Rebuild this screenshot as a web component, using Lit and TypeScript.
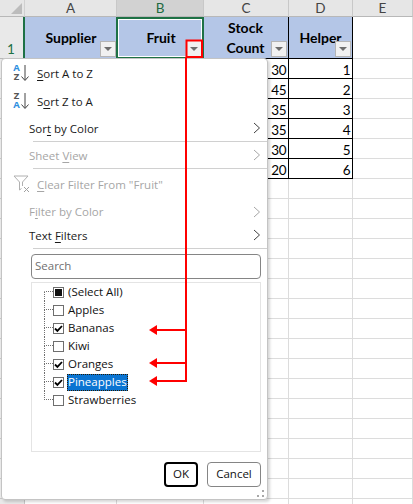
import { LitElement, html, css, svg } from "lit";
import { customElement } from "lit/decorators.js";

const COLS = ["A", "B", "C", "D", "E"];
const STOCK = ["30", "45", "35", "35", "30", "20"];
const FILTER_ITEMS: [string, string][] = [
  ["(Select All)", "mixed"],
  ["Apples", "off"],
  ["Bananas", "on"],
  ["Kiwi", "off"],
  ["Oranges", "on"],
  ["Pineapples", "on"],
  ["Strawberries", "off"],
];

const chevron = html`<svg class="chev" width="8" height="12" viewBox="0 0 8 12"><path d="M1 1l5.5 5L1 11" fill="none" stroke="currentColor" stroke-width="1"/></svg>`;

@customElement("app-root")
export class AppRoot extends LitElement {
  static styles = css`
    :host { display: block; position: relative; width: 413px; height: 504px; overflow: hidden; background: #fff; font-family: Lato, "Liberation Sans", sans-serif; }
    * { box-sizing: border-box; }
    .sheet { display: grid; grid-template-columns: 25px 92px 87px 85px 64px 60px; grid-template-rows: 17px 42px repeat(23, 20px); height: 504px; overflow: hidden; }
    .corner { background: #e6e6e6; border-right: 1px solid #d0d0d0; border-bottom: 1px solid #b8b8b8; position: relative; }
    .corner::after { content: ""; position: absolute; right: 2px; bottom: 2px; border-style: solid; border-width: 0 0 11px 11px; border-color: transparent transparent #bcbcbc transparent; }
    .colh { background: #e6e6e6; border-right: 1px solid #c8c8c8; border-bottom: 1px solid #b8b8b8; text-align: center; font-size: 13.5px; line-height: 16px; color: #444; }
    .colh.sel { background: #d2d2d2; color: #1e6b41; }
    .rowh { background: #e9e9e9; border-right: 2px solid #1e7145; border-bottom: 1px solid #b8b8b8; color: #1e7145; font-size: 13.5px; display: flex; align-items: flex-end; justify-content: center; line-height: 17px; padding-right: 1px; }
    .hd { position: relative; background: #b4c6e7; display: flex; align-items: center; justify-content: center; text-align: center; font-weight: 700; font-size: 14px; line-height: 20px; color: #000; border-right: 1px solid #000; border-bottom: 1px solid #000; padding-top: 1px; }
    .hd.a { border-right: none; }
    .hd.b { border: 2px solid #1e7145; box-shadow: inset 0 0 0 1px #fff; margin: 0 0 0 -1px; padding-top: 0; padding-left: 2px; }
    .hd.c { padding-right: 1px; }
    .fb { position: absolute; right: 1px; bottom: 1px; width: 16px; height: 16px; background: #f1f1f1; border: 1px solid #b5b5b5; display: flex; align-items: center; justify-content: center; }
    .hd.b .fb { right: 0; bottom: 0; border-color: #efefef; }
    .tri { width: 0; height: 0; border-style: solid; border-width: 4px 4px 0 4px; border-color: #6e6e6e transparent transparent transparent; }
    .cell { border-right: 1px solid #dcdcdc; border-bottom: 1px solid #dcdcdc; }
    .row { background: #e9e9e9; border-right: 1px solid #c8c8c8; border-bottom: 1px solid #c8c8c8; }
    .num { border-right: 1px solid #000; border-bottom: 1px solid #000; text-align: right; font-size: 13.5px; letter-spacing: -0.5px; line-height: 20px; padding: 1px 2px 0 0; color: #000; }

    .menu { position: absolute; left: 1px; top: 58px; width: 267px; height: 442px; background: #fff; border: 1px solid #c4c4c4; border-radius: 4px; box-shadow: 2px 2px 3px rgba(0,0,0,.16); font-family: "Open Sans", "Liberation Sans", sans-serif; font-size: 11.5px; color: #1a1a1a; display: flex; flex-direction: column; }
    .mi { display: flex; align-items: center; padding-left: 27px; padding-right: 6px; flex: none; }
    .mi.ico { padding-left: 11px; }
    .mi .lbl { flex: 1; }
    .mi.dis { color: #a6a6a6; }
    .mi .chev { color: #404040; }
    .mi.dis .chev { color: #a6a6a6; }
    .icon { width: 17px; height: 22px; margin-right: 7px; flex: none; display: block; }
    .h28 { height: 28px; }
    .h26 { height: 26px; }
    .h32 { height: 32px; padding-bottom: 2px; }
    .h22 { height: 23px; padding-bottom: 2px; }
    .h24 { height: 24px; padding-bottom: 2px; }
    .sep { flex: none; height: 1px; background: #d0d0d0; margin-left: 31px; }
    u { text-decoration-thickness: 1px; text-underline-offset: 2px; }
    .search { flex: none; margin: 5px 6px 0 29px; height: 25px; border: 1px solid #858585; border-radius: 4px; color: #707070; line-height: 22px; padding-left: 3px; }
    .list { flex: none; margin: 3px 6px 0 29px; height: 170px; border: 1px solid #e4e4e4; padding: 0 0 0 12px; }
    .li { height: 18px; display: flex; align-items: center; }
    .tree { width: 9px; height: 18px; flex: none; }
    .tree i { display: block; height: 9px; border-left: 1px dotted #707070; }
    .tree i:first-child { border-bottom: 1px dotted #707070; }
    .li.first .tree i:first-child { border-left-color: transparent; }
    .li.last .tree i:last-child { border-left-color: transparent; }
    .cb { width: 11px; height: 11px; border: 1px solid #6e6e6e; background: #fff; flex: none; margin-right: 3px; display: flex; align-items: center; justify-content: center; }
    .cb b { display: block; width: 7px; height: 7px; background: #111; }
    .cb svg { display: block; }
    .txt { padding: 0 1px; line-height: 16px; height: 17px; color: #111; }
    .txt.hit { background: #0a74d2; color: #fff; outline: 1px dotted #2a1a00; outline-offset: -1px; }
    .foot { flex: none; display: flex; justify-content: flex-end; gap: 9px; margin: 10px 6px 0 0; }
    .btn { height: 25px; border: 1px solid #858585; border-radius: 4px; width: 54px; background: #fff; text-align: center; line-height: 22px; color: #111; }
    .btn.ok { width: 34px; border: 2px solid #000; line-height: 20px; }
    .grip { position: absolute; right: 2px; bottom: 1px; display: block; }
    .red { position: absolute; left: 0; top: 0; pointer-events: none; }
  `;

  private sortIcon(top: string, bottom: string, topBlue: boolean) {
    return html`<svg class="icon" viewBox="0 0 17 22">
      <text x="3.5" y="9" text-anchor="middle" font-family="Open Sans, sans-serif" font-size="9.5" font-weight="700" fill=${topBlue ? "#2f8fe0" : "#555"}>${top}</text>
      <text x="3.5" y="18" text-anchor="middle" font-family="Open Sans, sans-serif" font-size="9.5" font-weight="700" fill=${topBlue ? "#555" : "#2f8fe0"}>${bottom}</text>
      <path d="M12 3v15M8.5 14.5l3.5 4 3.5-4" fill="none" stroke="#444" stroke-width="1"/>
    </svg>`;
  }

  private cb(state: string) {
    if (state === "mixed") return html`<span class="cb"><b></b></span>`;
    if (state === "on")
      return html`<span class="cb"><svg width="9" height="9" viewBox="0 0 9 9"><path d="M1 4.5l2.4 2.4L8 2" fill="none" stroke="#000" stroke-width="1.8"/></svg></span>`;
    return html`<span class="cb"></span>`;
  }

  private sheet() {
    const rows = [];
    for (let r = 0; r < 23; r++) {
      const data = r < 6;
      rows.push(html`<div class="row"></div><div class="cell"></div><div class="cell"></div>
        ${data ? html`<div class="num">${STOCK[r]}</div><div class="num">${r + 1}</div>` : html`<div class="cell"></div><div class="cell"></div>`}
        <div class="cell"></div>`);
    }
    const fb = html`<span class="fb"><span class="tri"></span></span>`;
    return html`<div class="sheet">
      <div class="corner"></div>
      ${COLS.map((c) => html`<div class="colh ${c === "B" ? "sel" : ""}">${c}</div>`)}
      <div class="rowh">1</div>
      <div class="hd a">Supplier${fb}</div>
      <div class="hd b">Fruit${fb}</div>
      <div class="hd c">Stock<br />Count${fb}</div>
      <div class="hd d">Helper${fb}</div>
      <div class="cell"></div>
      ${rows}
    </div>`;
  }

  private menu() {
    return html`<div class="menu">
      <div class="mi ico h28">${this.sortIcon("A", "Z", true)}<span class="lbl"><u>S</u>ort A to Z</span></div>
      <div class="mi ico h28">${this.sortIcon("Z", "A", false)}<span class="lbl">S<u>o</u>rt Z to A</span></div>
      <div class="mi h26"><span class="lbl">Sor<u>t</u> by Color</span>${chevron}</div>
      <div class="sep"></div>
      <div class="mi dis h26"><span class="lbl">Sheet <u>V</u>iew</span>${chevron}</div>
      <div class="sep"></div>
      <div class="mi ico dis h32">
        <svg class="icon" viewBox="0 0 17 22"><path d="M1 3h14l-5.5 6v4M1 3l5.5 6v8l2-1.5" fill="none" stroke="#b0b0b0" stroke-width="1"/><path d="M11 14l5 5M16 14l-5 5" stroke="#a0a0a0" stroke-width="1"/></svg>
        <span class="lbl"><u>C</u>lear Filter From "Fruit"</span>
      </div>
      <div class="mi dis h22"><span class="lbl">F<u>i</u>lter by Color</span>${chevron}</div>
      <div class="mi h24"><span class="lbl">Text <u>F</u>ilters</span>${chevron}</div>
      <div class="sep"></div>
      <div class="search">Search</div>
      <div class="list">
        ${FILTER_ITEMS.map(([name, st], i) => html`<div class="li ${i === 0 ? "first" : ""} ${i === FILTER_ITEMS.length - 1 ? "last" : ""}">
          <span class="tree"><i></i><i></i></span>${this.cb(st)}<span class="txt ${name === "Pineapples" ? "hit" : ""}">${name}</span>
        </div>`)}
      </div>
      <div class="foot"><div class="btn ok">OK</div><div class="btn">Cancel</div></div>
      <svg class="grip" width="9" height="9" viewBox="0 0 9 9" fill="#a8a8a8"><rect x="6" y="1" width="2" height="2"/><rect x="1" y="6" width="2" height="2"/><rect x="6" y="6" width="2" height="2"/></svg>
    </div>`;
  }

  private arrows() {
    const ys = [330, 363, 381];
    return html`<svg class="red" width="413" height="504" viewBox="0 0 413 504">
      <rect x="186.5" y="40.5" width="15.5" height="16.5" fill="none" stroke="#f00" stroke-width="2"/>
      <path d="M186 57V382" stroke="#f00" stroke-width="2" fill="none"/>
      ${ys.map((y) => svg`<path d="M187 ${y}H156" stroke="#f00" stroke-width="2" fill="none"/><path d="M149 ${y}l8-5v10z" fill="#f00"/>`)}
    </svg>`;
  }

  render() {
    return html`${this.sheet()}${this.menu()}${this.arrows()}`;
  }
}
